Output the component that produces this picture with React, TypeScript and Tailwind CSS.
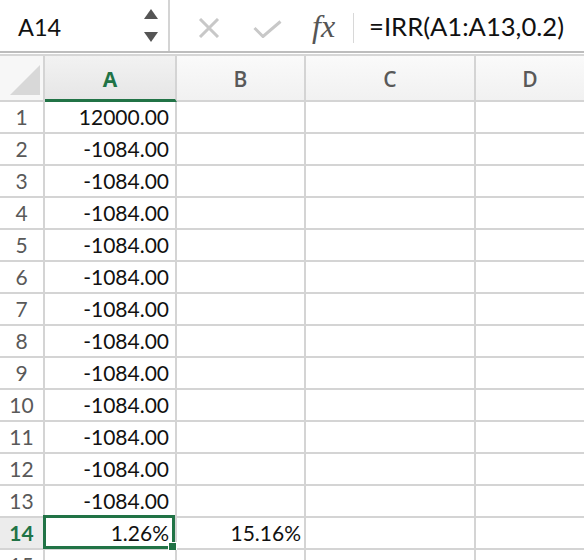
import React from "react";

const rows: { a: string; b: string }[] = [
  { a: "12000.00", b: "" },
  ...Array.from({ length: 12 }, () => ({ a: "-1084.00", b: "" })),
  { a: "1.26%", b: "15.16%" },
  { a: "", b: "" },
];

const cellFont = { fontFamily: "Lato, 'Open Sans', sans-serif" };
const headFont = { fontFamily: "'Open Sans', 'DejaVu Sans', sans-serif" };

export default function App() {
  return (
    <div className="w-[584px] h-[560px] overflow-hidden bg-white relative">
      {/* Formula bar */}
      <div className="flex h-[51px] bg-white">
        <div className="relative w-[170px] h-full border-r-2 border-[#d4d4d4] flex items-center">
          <span className="pl-[18px] text-[23.5px] text-[#111] mt-[4px]" style={cellFont}>
            A14
          </span>
          <svg className="absolute left-[144px] top-[9px]" width="14" height="34" viewBox="0 0 14 34">
            <polygon points="7,0 14,10 0,10" fill="#555" />
            <polygon points="0,23 14,23 7,33" fill="#555" />
          </svg>
        </div>
        <div className="flex items-center h-full">
          <svg className="ml-[28px] mt-[4px]" width="22" height="20" viewBox="0 0 22 20">
            <path d="M2 1 L20 19 M20 1 L2 19" stroke="#c8c8c8" strokeWidth="3" />
          </svg>
          <svg className="ml-[33px] mt-[6px]" width="29" height="18" viewBox="0 0 29 18">
            <path d="M1.5 8 L10 16.5 L27.5 1.5" stroke="#c8c8c8" strokeWidth="3" fill="none" />
          </svg>
          <span
            className="ml-[30px] text-[32px] italic text-[#555] leading-none"
            style={{ fontFamily: "'Liberation Serif', 'DejaVu Serif', serif" }}
          >
            fx
          </span>
          <div className="ml-[18px] w-px h-[30px] bg-[#d8d8d8] mt-[4px]" />
          <span className="ml-[15px] text-[25.6px] text-[#111] mt-[2px]" style={cellFont}>
            =IRR(A1:A13,0.2)
          </span>
        </div>
      </div>
      <div className="h-[2px] bg-[#bdbdbd]" />
      <div className="h-px bg-white" />
      <div className="h-[2px] bg-[#d6d6d6]" />

      {/* Grid */}
      <div className="grid grid-cols-[45px_132px_129px_170px_1fr]">
        {/* header */}
        <div className="relative h-[46px] bg-[#f7f7f7] border-r-2 border-b-2 border-[#d4d4d4]">
          <svg className="absolute left-[10px] top-[9px]" width="30" height="30" viewBox="0 0 30 30">
            <polygon points="30,0 30,30 0,30" fill="#d8d8d8" />
          </svg>
        </div>
        <div
          className="h-[46px] bg-gradient-to-b from-[#f2f2f2] to-[#e6e6e6] border-r-2 border-[#d4d4d4] border-b-[3px] border-b-[#217346] flex items-center justify-center text-[21px] font-bold text-[#217346] pt-[4px]"
          style={headFont}
        >
          A
        </div>
        {["B", "C", "D"].map((c, i) => (
          <div
            key={c}
            className={`h-[46px] bg-gradient-to-b from-[#fafafa] to-[#f1f1f1] border-b-2 border-[#d4d4d4] flex items-center justify-center text-[21px] font-semibold text-[#595959] pt-[4px] ${
              i < 2 ? "border-r-2" : ""
            }`}
            style={headFont}
          >
            {c}
          </div>
        ))}

        {rows.map((r, idx) => {
          const n = idx + 1;
          const sel = n === 14;
          return (
            <React.Fragment key={n}>
              <div
                className={`h-[32px] border-r-2 border-b-2 border-[#d4d4d4] flex items-center justify-center text-[21px] ${
                  sel ? "bg-[#ececec] text-[#217346] font-bold" : "bg-white text-[#595959]"
                }`}
                style={cellFont}
              >
                {n}
              </div>
              <div
                className="relative h-[32px] border-r-2 border-b-2 border-[#d4d4d4] flex items-center justify-end pr-[6px] text-[21px] text-[#111]"
                style={cellFont}
              >
                {r.a}
                {sel && (
                  <div className="absolute -left-[2px] right-0 -top-[3px] -bottom-[1px] border-[3px] border-[#217346]">
                    <div className="absolute -right-[5px] -bottom-[5px] w-[9px] h-[9px] bg-[#217346] border border-white" />
                  </div>
                )}
              </div>
              <div
                className="h-[32px] border-r-2 border-b-2 border-[#d4d4d4] flex items-center justify-end pr-[3px] text-[21px] text-[#111]"
                style={cellFont}
              >
                {r.b}
              </div>
              <div className="h-[32px] border-r-2 border-b-2 border-[#d4d4d4]" />
              <div className="h-[32px] border-b-2 border-[#d4d4d4]" />
            </React.Fragment>
          );
        })}
      </div>
    </div>
  );
}
